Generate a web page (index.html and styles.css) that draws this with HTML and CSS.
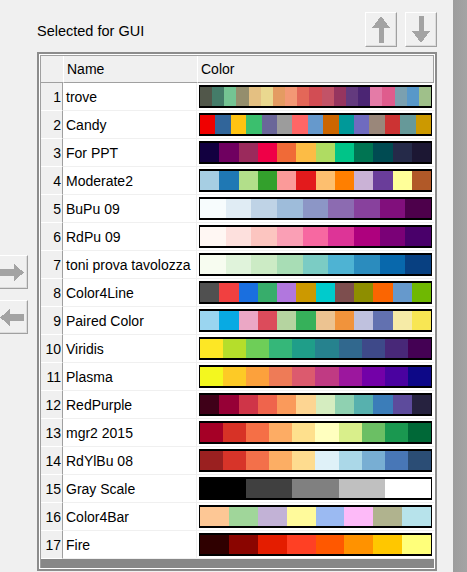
FILE: index.html
```html
<!DOCTYPE html>
<html lang="en">
<head>
    <meta charset="UTF-8">
    <title>Selected for GUI</title>
    <link rel="stylesheet" href="styles.css">
</head>
<body>
    <div class="side-panel">
        <button class="arrow-btn side-btn" id="addBtn">
            <svg width="24" height="17" viewBox="0 0 24 17" shape-rendering="crispEdges">
                <polygon points="0,5 14,5 14,0 24,8.5 14,17 14,12 0,12" fill="#a3a3a3"/>
            </svg>
        </button>
        <button class="arrow-btn side-btn" id="removeBtn">
            <svg width="24" height="17" viewBox="0 0 24 17" shape-rendering="crispEdges">
                <polygon points="24,5 10,5 10,0 0,8.5 10,17 10,12 24,12" fill="#a3a3a3"/>
            </svg>
        </button>
    </div>

    <div class="main-panel">
        <div class="panel-header">
            <div class="panel-title">Selected for GUI</div>
            <div class="order-buttons">
                <button class="arrow-btn" id="upBtn">
                    <svg width="18" height="27" viewBox="0 0 18 27" shape-rendering="crispEdges">
                        <polygon points="9,0 18,12 11.5,12 11.5,27 6.5,27 6.5,12 0,12" fill="#a3a3a3"/>
                    </svg>
                </button>
                <button class="arrow-btn" id="downBtn">
                    <svg width="18" height="27" viewBox="0 0 18 27" shape-rendering="crispEdges">
                        <polygon points="6.5,0 11.5,0 11.5,15 18,15 9,27 0,15 6.5,15" fill="#a3a3a3"/>
                    </svg>
                </button>
            </div>
        </div>

        <div class="grid-frame">
            <div class="grid">
                <div class="grid-row grid-head">
                    <div class="cell head-num"></div>
                    <div class="cell head-name">Name</div>
                    <div class="cell head-color">Color</div>
                </div>
                <div id="paletteRows"></div>
                <div class="grid-scroll"></div>
            </div>
        </div>
    </div>

    <div class="gutter"></div>
    <div class="scroll-strip"></div>

    <script src="palettes.js"></script>
</body>
</html>
```

FILE: styles.css
```css
body {
    margin: 0;
    width: 467px;
    height: 572px;
    overflow: hidden;
    display: flex;
    background-color: #f0f0f0;
    font-family: "Liberation Sans", Arial, sans-serif;
    font-size: 14px;
    color: #000;
}

/* left add / remove buttons */
.side-panel {
    width: 37px;
    flex-shrink: 0;
    box-sizing: border-box;
    padding-top: 255px;
    display: flex;
    flex-direction: column;
    gap: 11px;
}
.side-btn {
    width: 32px;
    height: 34px;
    margin-left: -4px;
}

.arrow-btn {
    display: flex;
    align-items: center;
    justify-content: center;
    box-sizing: border-box;
    padding: 0;
    background-color: #f0f0f0;
    border: 1px solid;
    border-color: #fff #a0a0a0 #a0a0a0 #fff;
    box-shadow: inset -1px -1px 0 #dcdcdc;
}

.main-panel {
    width: 400px;
    flex-shrink: 0;
}
.panel-header {
    height: 52px;
    box-sizing: border-box;
    padding-top: 12px;
    display: flex;
    justify-content: space-between;
}
.panel-title {
    margin-top: 11px;
    font-size: 14.5px;
}
.order-buttons {
    display: flex;
    gap: 8px;
}
.order-buttons .arrow-btn {
    width: 32px;
    height: 35px;
}

/* palette grid */
.grid-frame {
    border: 2px solid #8c8c8c;
    padding: 1px;
    background-color: #fff;
}
.grid {
    border-top: 1px solid #a0a0a0;
    border-left: 1px solid #a0a0a0;
}
.grid-row {
    display: grid;
    grid-template-columns: 22px 134px 237px;
    height: 28px;
}
.cell {
    box-sizing: border-box;
    display: flex;
    align-items: center;
}
.grid-head {
    height: 27px;
}
.grid-head .cell {
    background-color: #f0f0f0;
    border-bottom: 1px solid #a0a0a0;
}
.head-name, .head-color {
    border-left: 1px solid #fff;
    padding-left: 3px;
}
.head-color {
    border-right: 1px solid #a0a0a0;
}

.row-num {
    justify-content: flex-end;
    padding-right: 1px;
    background-color: #f0f0f0;
    border-right: 1px solid #a0a0a0;
    border-bottom: 1px solid #fff;
}
.row-name {
    padding-left: 3px;
    background-color: #fff;
    border-right: 1px solid #f0f0f0;
    border-bottom: 1px solid #f0f0f0;
}
.row-color {
    align-items: flex-start;
    padding: 2px 2px 0;
    border-bottom: 1px solid #f0f0f0;
}
.swatch {
    display: flex;
    width: 100%;
    height: 23px;
    box-sizing: border-box;
    border: solid #000;
    border-width: 2px 1px;
}
.swatch span {
    flex: 1;
}

.grid-scroll {
    height: 9px;
    background-color: #878787;
}

.gutter {
    width: 16px;
    flex-shrink: 0;
}
.scroll-strip {
    flex: 1;
    background: linear-gradient(90deg, #9d9d9d, #a4a4a4);
}
```

FILE: palettes.js
```js
var palettes = [
    { name: 'trove', colors: ['#51574a', '#447c69', '#74c493', '#948e6d', '#e4c082', '#e9d88f', '#e49b62', '#f39875', '#e36758', '#d24d54', '#c25367', '#96355f', '#633a7e', '#4b2573', '#e47ba7', '#df5c8d', '#7aa0b0', '#5898c9', '#9fc08a'] },
    { name: 'Candy', colors: ['#f00000', '#31659a', '#ffc312', '#3bbf6e', '#6a6699', '#9c9c9c', '#ff6666', '#6699cc', '#cc6600', '#009999', '#6f6bbf', '#9a877a', '#cc3333', '#669999', '#cc9900'] },
    { name: 'For PPT', colors: ['#120040', '#6f0060', '#9b2a5c', '#ef0047', '#f06a37', '#fcbc45', '#afdc62', '#00c488', '#007452', '#004b52', '#252a49', '#1c1733'] },
    { name: 'Moderate2', colors: ['#a6cee3', '#1f78b4', '#b2df8a', '#33a02c', '#fb9a99', '#e31a1c', '#fdbf6f', '#ff7f00', '#cab2d6', '#6a3d9a', '#ffff99', '#b15928'] },
    { name: 'BuPu 09', colors: ['#f7fcfd', '#e0ecf4', '#bfd3e6', '#9ebcda', '#8c96c6', '#8c6bb1', '#88419d', '#810f7c', '#4d004b'] },
    { name: 'RdPu 09', colors: ['#fff7f3', '#fde0dd', '#fcc5c0', '#fa9fb5', '#f768a1', '#dd3497', '#ae017e', '#7a0177', '#49006a'] },
    { name: 'toni prova tavolozza', colors: ['#f7fcf0', '#e0f3db', '#ccebc5', '#a8ddb5', '#7bccc4', '#4eb3d3', '#2b8cbe', '#0868ac', '#084081'] },
    { name: 'Color4Line', colors: ['#505050', '#f14040', '#1a6fdf', '#37ad6b', '#b177de', '#cc9900', '#00cbcc', '#7d4e4e', '#8e8e00', '#fb6501', '#6699cc', '#6fb802'] },
    { name: 'Paired Color', colors: ['#9ad5f0', '#08aae3', '#eba7c5', '#dc4b5b', '#b5d4a0', '#36b15a', '#ecc391', '#f1933b', '#bfc1de', '#6271b0', '#f6eba7', '#f8e653'] },
    { name: 'Viridis', colors: ['#fde725', '#b5de2b', '#6ece58', '#35b779', '#1f9e89', '#26828e', '#31688e', '#3e4989', '#482878', '#440154'] },
    { name: 'Plasma', colors: ['#f3f71f', '#fdca26', '#fca13c', '#ee7b57', '#dc5a6e', '#c03a83', '#9c179e', '#7301a8', '#4a02a0', '#0d0887'] },
    { name: 'RedPurple', colors: ['#3f0018', '#960036', '#cf3548', '#ef644c', '#fa9a5b', '#fdd592', '#d5edc0', '#8fd1b1', '#57b1ae', '#3b7db9', '#5d4b9c', '#26223f'] },
    { name: 'mgr2 2015', colors: ['#a50026', '#d73226', '#f56f46', '#fdac64', '#fee08d', '#ffffbf', '#d9ef8b', '#6bbf64', '#1a9850', '#006837'] },
    { name: 'RdYlBu 08', colors: ['#9a2020', '#d73429', '#f3704a', '#fcae64', '#fedc8f', '#dff1f8', '#abd8e8', '#78aed3', '#4877b7', '#2b4d75'] },
    { name: 'Gray Scale', colors: ['#000000', '#404040', '#808080', '#c0c0c0', '#ffffff'] },
    { name: 'Color4Bar', colors: ['#fdc795', '#a0d69a', '#c2b2d6', '#fffa9b', '#9bbaf2', '#fdbaf8', '#b0b38e', '#b7e3eb'] },
    { name: 'Fire', colors: ['#2f0000', '#8a0500', '#e41d00', '#ff4024', '#ff5800', '#ff9200', '#ffc700', '#ffff7a'] }
];

var paletteRows = document.getElementById('paletteRows');

palettes.forEach(function (palette, i) {
    var row = document.createElement('div');
    row.className = 'grid-row';

    var num = document.createElement('div');
    num.className = 'cell row-num';
    num.textContent = i + 1;

    var name = document.createElement('div');
    name.className = 'cell row-name';
    name.textContent = palette.name;

    var colorCell = document.createElement('div');
    colorCell.className = 'cell row-color';
    var swatch = document.createElement('div');
    swatch.className = 'swatch';
    palette.colors.forEach(function (c) {
        var s = document.createElement('span');
        s.style.backgroundColor = c;
        swatch.appendChild(s);
    });
    colorCell.appendChild(swatch);

    row.appendChild(num);
    row.appendChild(name);
    row.appendChild(colorCell);
    paletteRows.appendChild(row);
});
```
